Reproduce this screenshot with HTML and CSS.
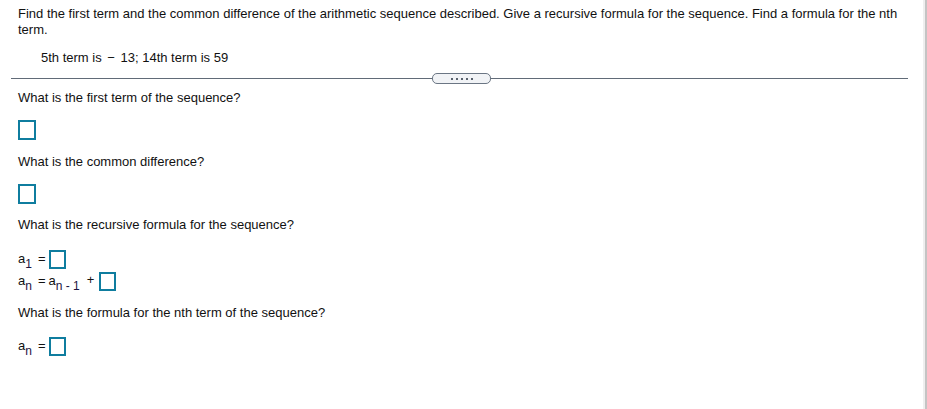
FILE: index.html
```html
<!DOCTYPE html>
<html lang="en">
<head>
<meta charset="utf-8">
<title>Arithmetic sequence</title>
<link rel="stylesheet" href="styles.css">
</head>
<body>
<div class="frame">
  <main class="page">
    <section class="question">
      <p class="prompt">Find the first term and the common difference of the arithmetic sequence described. Give a recursive formula for the sequence. Find a formula for the nth term.</p>
      <p class="given">5th term is <span class="minus">−</span> 13; 14th term is 59</p>
    </section>
    <div class="divider">
      <span class="rule rule-left"></span>
      <span class="pill"><i></i><i></i><i></i><i></i><i></i></span>
      <span class="rule rule-right"></span>
    </div>
    <section class="answers">
      <p class="ask ask-first">What is the first term of the sequence?</p>
      <div class="box box-solo"></div>
      <p class="ask">What is the common difference?</p>
      <div class="box box-solo"></div>
      <p class="ask ask-tight">What is the recursive formula for the sequence?</p>
      <div class="formula formula-first">
        <span class="var">a<sub>1</sub></span><span class="op">=</span><span class="box box-inline"></span>
      </div>
      <div class="formula">
        <span class="var">a<sub>n</sub></span><span class="op">=</span><span class="var">a<sub>n - 1</sub></span><span class="op op-plus">+</span><span class="box box-inline"></span>
      </div>
      <p class="ask ask-tight">What is the formula for the nth term of the sequence?</p>
      <div class="formula formula-last">
        <span class="var">a<sub>n</sub></span><span class="op">=</span><span class="box box-inline"></span>
      </div>
    </section>
  </main>
  <div class="scrollbar"><span class="track"></span><span class="edge"></span></div>
</div>
</body>
</html>
```
FILE: styles.css
```css
html, body {
  margin: 0;
  padding: 0;
  background: #ffffff;
}

body {
  font-family: "Liberation Sans", Arial, sans-serif;
  font-size: 13px;
  line-height: 16px;
  color: #111111;
}

.frame {
  display: flex;
  height: 409px;
}

.page {
  flex: 0 0 923px;
  padding-top: 6px;
  box-sizing: border-box;
}

.scrollbar {
  flex: 0 0 4px;
  display: flex;
}

.scrollbar .track {
  flex: 0 0 2px;
  background: #efefef;
}

.scrollbar .edge {
  flex: 0 0 2px;
  background: #c4c4c4;
}

p {
  margin: 0;
}

.question {
  padding-left: 18px;
}

.prompt {
  width: 888px;
}

.given {
  margin-top: 12px;
  padding-left: 23px;
}

.minus {
  padding: 0 2px;
}

.divider {
  display: flex;
  align-items: center;
  height: 11px;
  margin-top: 7px;
  margin-left: 11px;
  width: 897px;
}

.rule {
  height: 1px;
  background: #616b78;
}

.rule-left {
  flex: 0 0 421px;
}

.rule-right {
  flex: 1 1 auto;
}

.pill {
  flex: 0 0 59px;
  height: 11px;
  box-sizing: border-box;
  border: 1px solid #6b7684;
  border-radius: 5px;
  background: #f1f3f6;
  display: flex;
  align-items: center;
  justify-content: center;
  gap: 3px;
}

.pill i {
  display: block;
  width: 2px;
  height: 2px;
  background: #59626e;
}

.answers {
  padding-left: 18px;
}

.ask {
  margin-top: 14px;
}

.ask-first {
  margin-top: 6px;
}

.ask-tight {
  margin-top: 13px;
}

.box {
  box-sizing: border-box;
  border: 2px solid #0f7d9f;
  background: #ffffff;
}

.box-solo {
  width: 18px;
  height: 20px;
  margin-top: 14px;
}

.formula {
  display: flex;
  align-items: center;
  height: 22px;
}

.formula-first {
  margin-top: 15px;
}

.formula-last {
  margin-top: 14px;
}

.var sub {
  font-size: 12px;
  vertical-align: -5px;
  line-height: 0;
  color: #1a1440;
}

.op {
  padding: 0 3px 0 6px;
}

.op-plus {
  padding: 0 5px 0 7px;
  position: relative;
  top: -1px;
}

.box-inline {
  width: 17px;
  height: 19px;
}
```
